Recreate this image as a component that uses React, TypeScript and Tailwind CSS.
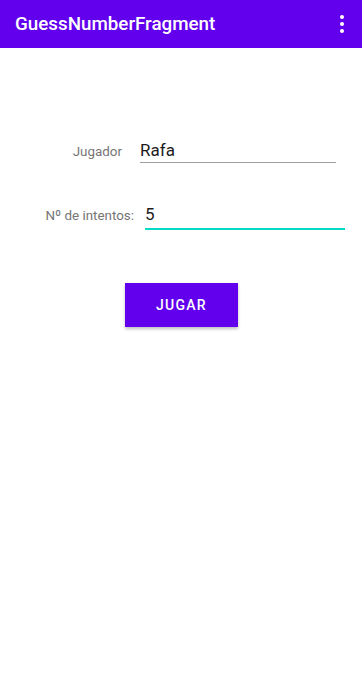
export default function App() {
  return (
    <div className="min-h-[690px] bg-white font-['Roboto',sans-serif]">
      <header className="h-[48px] bg-[#6200ee] flex items-center justify-between pl-[15px] pr-[8px]">
        <h1 className="text-[18.8px] font-medium text-white leading-none">GuessNumberFragment</h1>
        <div className="w-[24px] h-[24px] flex flex-col items-center justify-center gap-[3px]">
          <span className="w-[4px] h-[4px] rounded-full bg-white" />
          <span className="w-[4px] h-[4px] rounded-full bg-white" />
          <span className="w-[4px] h-[4px] rounded-full bg-white" />
        </div>
      </header>

      <main className="pt-[92px]">
        <div className="flex items-baseline">
          <label className="w-[122px] text-right text-[13.4px] leading-[20px] text-[#757575]">Jugador</label>
          <div className="ml-[18px] w-[196px] pb-[2px] border-b border-[#9e9e9e]">
            <div className="text-[17px] leading-[20px] text-[#1c1c1c]">Rafa</div>
          </div>
        </div>

        <div className="flex items-baseline mt-[41px]">
          <label className="w-[134px] text-right text-[13.4px] leading-[20px] text-[#757575]">Nº de intentos:</label>
          <div className="ml-[11px] w-[200px] pb-[4px] border-b-2 border-[#03dac5]">
            <div className="text-[17px] leading-[20px] text-[#1c1c1c]">5</div>
          </div>
        </div>

        <div className="flex justify-center mt-[53px]">
          <button className="w-[113px] h-[44px] ml-[1px] bg-[#6200ee] text-white text-[14px] font-medium tracking-[1.25px] shadow-[0_2px_3px_rgba(0,0,0,0.25)]">
            JUGAR
          </button>
        </div>
      </main>
    </div>
  );
}
